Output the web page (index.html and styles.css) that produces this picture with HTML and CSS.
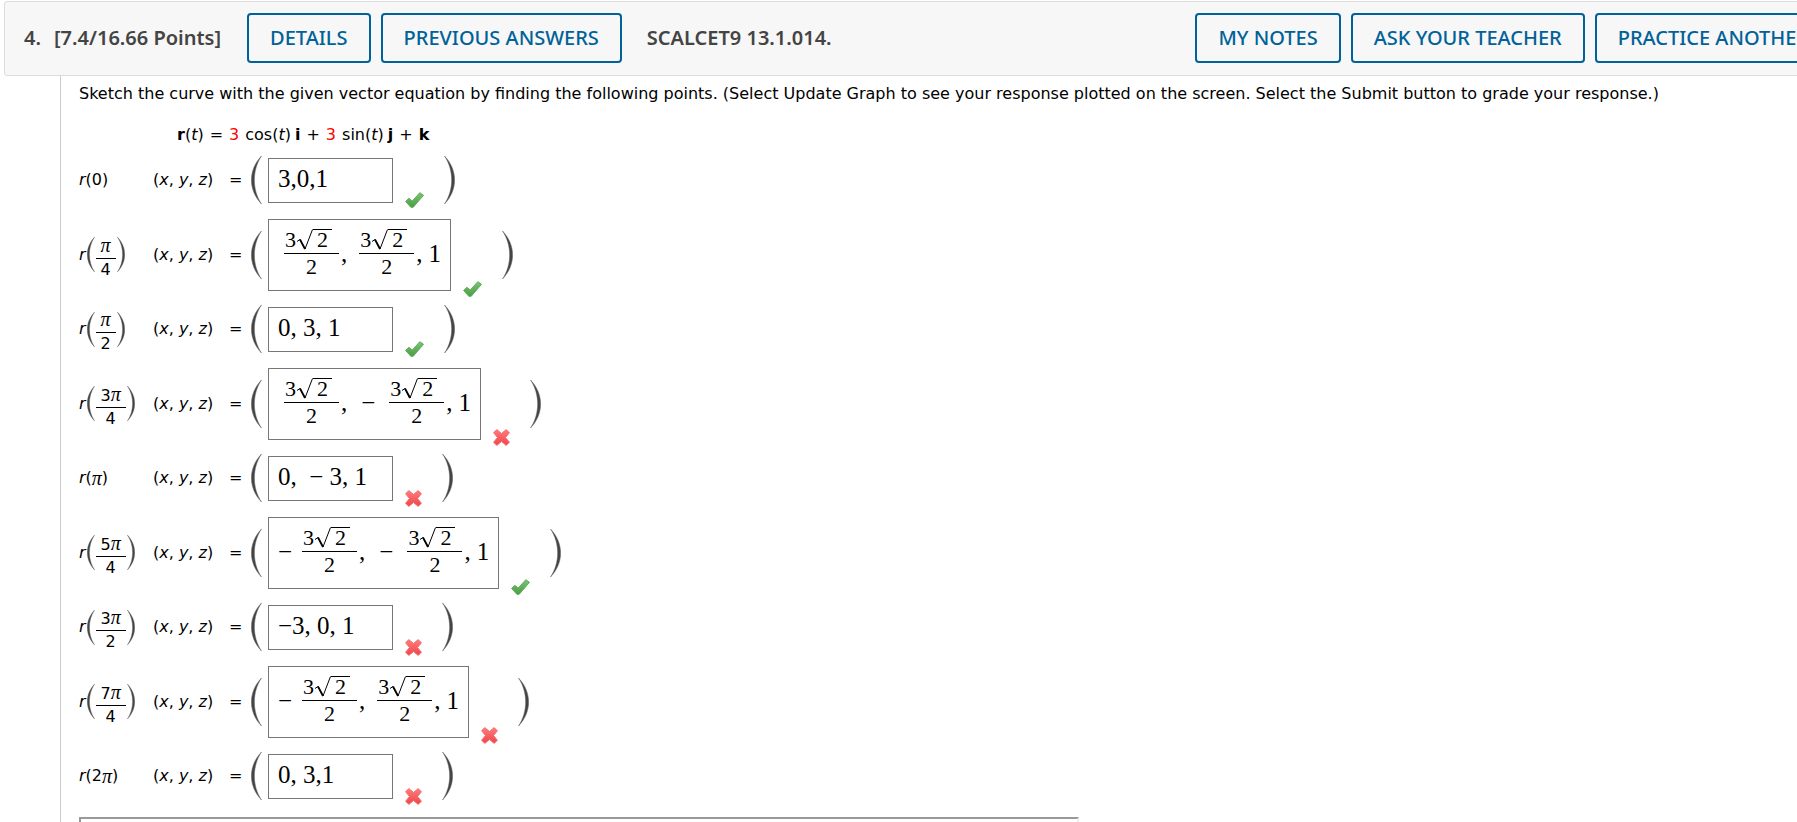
FILE: index.html
```html
<!DOCTYPE html>
<html lang="en">
<head>
<meta charset="utf-8">
<title>SCALCET9 13.1.014.</title>
<link rel="stylesheet" href="styles.css">
</head>
<body>
<svg class="defs" aria-hidden="true">
  <defs>
    <linearGradient id="green" x1="0" y1="0" x2="0" y2="1"><stop offset="0" stop-color="#7cc474"/><stop offset="1" stop-color="#4a9c48"/></linearGradient>
    <linearGradient id="red" x1="0" y1="0" x2="0" y2="1"><stop offset="0" stop-color="#ff7d7d"/><stop offset="1" stop-color="#ee4448"/></linearGradient>
    <symbol id="open" viewBox="0 0 11 48" preserveAspectRatio="none"><path d="M10.500 0C-3 14-3 34 10.500 48C1 34 1 14 10.500 0Z" fill="#444" stroke="#666" stroke-width=".5"/></symbol>
    <symbol id="close" viewBox="0 0 11 48" preserveAspectRatio="none"><path d="M.5 0C14 14 14 34 .5 48C10 34 10 14 .5 0Z" fill="#444" stroke="#666" stroke-width=".5"/></symbol>
    <symbol id="root" viewBox="0 0 17 21"><path d="M1 12.500L4 10.500L9 20L16.500.5" fill="none" stroke="#000" stroke-width="1"/><path d="M4 10.500L9 20" stroke="#000" stroke-width="1.800"/></symbol>
    <symbol id="check" viewBox="0 0 19 16"><path d="M.6 9.500L3.800 6.300L7.300 9L14.800.7L18.500 3.300L8.300 15.200L6 15.400Z" fill="url(#green)" stroke="#5fae5a" stroke-width="1" stroke-linejoin="round"/></symbol>
    <symbol id="cross" viewBox="0 0 17 17"><path d="M.6 3.800L3.800.6L8.500 4.500L13.200.6L16.400 3.800L12.500 8.500L16.400 13.200L13.200 16.400L8.500 12.500L3.800 16.400L.6 13.200L4.500 8.500Z" fill="url(#red)" stroke="#f66a6c" stroke-width="1" stroke-linejoin="round"/></symbol>
  </defs>
</svg>

<header class="bar">
  <span class="num">4.</span>
  <span class="points">[7.4/16.66 Points]</span>
  <button class="btn" type="button">DETAILS</button>
  <button class="btn" type="button">PREVIOUS ANSWERS</button>
  <span class="code">SCALCET9 13.1.014.</span>
  <div class="tools">
    <button class="btn" type="button">MY NOTES</button>
    <button class="btn" type="button">ASK YOUR TEACHER</button>
    <button class="btn" type="button">PRACTICE ANOTHER</button>
  </div>
</header>

<main class="question">
  <p class="prompt">Sketch the curve with the given vector equation by finding the following points. (Select Update Graph to see your response plotted on the screen. Select the Submit button to grade your response.)</p>
  <p class="equation"><span><b>r</b>(<i>t</i>)</span><span>=</span><span class="value">3</span><span>cos(<i>t</i>)<b class="unit">i</b></span><span>+</span><span class="value">3</span><span>sin(<i>t</i>)<b class="unit">j</b></span><span>+</span><b>k</b></p>

  <div class="rows">
    <div class="row">
      <label class="at" for="p0"><i>r</i>(0)</label>
      <span class="xyz">(<i>x</i>, <i>y</i>, <i>z</i>)</span><span class="eq">=</span>
      <svg class="paren"><use href="#open"/></svg>
      <input class="box" id="p0" type="text" value="3,0,1">
      <svg class="mark check" role="img" aria-label="Correct"><use href="#check"/></svg>
      <svg class="paren"><use href="#close"/></svg>
    </div>
    <div class="row">
      <span class="at" id="l1"><i>r</i><svg class="small"><use href="#open"/></svg><span class="ratio"><span class="top"><i class="pi">π</i></span><span>4</span></span><svg class="small"><use href="#close"/></svg></span>
      <span class="xyz">(<i>x</i>, <i>y</i>, <i>z</i>)</span><span class="eq">=</span>
      <svg class="paren"><use href="#open"/></svg>
      <div class="box tall" role="textbox" tabindex="0" aria-labelledby="l1"><span class="frac"><span class="over">3<svg class="root"><use href="#root"/></svg><span class="rad">2</span></span><span>2</span></span><span class="comma">,</span><span class="frac"><span class="over">3<svg class="root"><use href="#root"/></svg><span class="rad">2</span></span><span>2</span></span><span class="comma">,</span><span>1</span></div>
      <svg class="mark check" role="img" aria-label="Correct"><use href="#check"/></svg>
      <svg class="paren"><use href="#close"/></svg>
    </div>
    <div class="row">
      <label class="at" for="p2"><i>r</i><svg class="small"><use href="#open"/></svg><span class="ratio"><span class="top"><i class="pi">π</i></span><span>2</span></span><svg class="small"><use href="#close"/></svg></label>
      <span class="xyz">(<i>x</i>, <i>y</i>, <i>z</i>)</span><span class="eq">=</span>
      <svg class="paren"><use href="#open"/></svg>
      <input class="box" id="p2" type="text" value="0, 3, 1">
      <svg class="mark check" role="img" aria-label="Correct"><use href="#check"/></svg>
      <svg class="paren"><use href="#close"/></svg>
    </div>
    <div class="row">
      <span class="at" id="l3"><i>r</i><svg class="small"><use href="#open"/></svg><span class="ratio"><span class="top">3<i class="pi">π</i></span><span>4</span></span><svg class="small"><use href="#close"/></svg></span>
      <span class="xyz">(<i>x</i>, <i>y</i>, <i>z</i>)</span><span class="eq">=</span>
      <svg class="paren"><use href="#open"/></svg>
      <div class="box tall" role="textbox" tabindex="0" aria-labelledby="l3"><span class="frac"><span class="over">3<svg class="root"><use href="#root"/></svg><span class="rad">2</span></span><span>2</span></span><span class="comma">,</span><span class="minus">−</span><span class="frac"><span class="over">3<svg class="root"><use href="#root"/></svg><span class="rad">2</span></span><span>2</span></span><span class="comma">,</span><span>1</span></div>
      <svg class="mark cross" role="img" aria-label="Incorrect"><use href="#cross"/></svg>
      <svg class="paren"><use href="#close"/></svg>
    </div>
    <div class="row">
      <label class="at" for="p4"><i>r</i>(<i class="pi">π</i>)</label>
      <span class="xyz">(<i>x</i>, <i>y</i>, <i>z</i>)</span><span class="eq">=</span>
      <svg class="paren"><use href="#open"/></svg>
      <input class="box" id="p4" type="text" value="0,  − 3, 1">
      <svg class="mark cross" role="img" aria-label="Incorrect"><use href="#cross"/></svg>
      <svg class="paren"><use href="#close"/></svg>
    </div>
    <div class="row">
      <span class="at" id="l5"><i>r</i><svg class="small"><use href="#open"/></svg><span class="ratio"><span class="top">5<i class="pi">π</i></span><span>4</span></span><svg class="small"><use href="#close"/></svg></span>
      <span class="xyz">(<i>x</i>, <i>y</i>, <i>z</i>)</span><span class="eq">=</span>
      <svg class="paren"><use href="#open"/></svg>
      <div class="box tall" role="textbox" tabindex="0" aria-labelledby="l5"><span class="sign">−</span><span class="frac"><span class="over">3<svg class="root"><use href="#root"/></svg><span class="rad">2</span></span><span>2</span></span><span class="comma">,</span><span class="minus">−</span><span class="frac"><span class="over">3<svg class="root"><use href="#root"/></svg><span class="rad">2</span></span><span>2</span></span><span class="comma">,</span><span>1</span></div>
      <svg class="mark check" role="img" aria-label="Correct"><use href="#check"/></svg>
      <svg class="paren"><use href="#close"/></svg>
    </div>
    <div class="row">
      <label class="at" for="p6"><i>r</i><svg class="small"><use href="#open"/></svg><span class="ratio"><span class="top">3<i class="pi">π</i></span><span>2</span></span><svg class="small"><use href="#close"/></svg></label>
      <span class="xyz">(<i>x</i>, <i>y</i>, <i>z</i>)</span><span class="eq">=</span>
      <svg class="paren"><use href="#open"/></svg>
      <input class="box" id="p6" type="text" value="−3, 0, 1">
      <svg class="mark cross" role="img" aria-label="Incorrect"><use href="#cross"/></svg>
      <svg class="paren"><use href="#close"/></svg>
    </div>
    <div class="row">
      <span class="at" id="l7"><i>r</i><svg class="small"><use href="#open"/></svg><span class="ratio"><span class="top">7<i class="pi">π</i></span><span>4</span></span><svg class="small"><use href="#close"/></svg></span>
      <span class="xyz">(<i>x</i>, <i>y</i>, <i>z</i>)</span><span class="eq">=</span>
      <svg class="paren"><use href="#open"/></svg>
      <div class="box tall" role="textbox" tabindex="0" aria-labelledby="l7"><span class="sign">−</span><span class="frac"><span class="over">3<svg class="root"><use href="#root"/></svg><span class="rad">2</span></span><span>2</span></span><span class="comma">,</span><span class="frac"><span class="over">3<svg class="root"><use href="#root"/></svg><span class="rad">2</span></span><span>2</span></span><span class="comma">,</span><span>1</span></div>
      <svg class="mark cross" role="img" aria-label="Incorrect"><use href="#cross"/></svg>
      <svg class="paren"><use href="#close"/></svg>
    </div>
    <div class="row">
      <label class="at" for="p8"><i>r</i>(2<i class="pi">π</i>)</label>
      <span class="xyz">(<i>x</i>, <i>y</i>, <i>z</i>)</span><span class="eq">=</span>
      <svg class="paren"><use href="#open"/></svg>
      <input class="box" id="p8" type="text" value="0, 3,1">
      <svg class="mark cross" role="img" aria-label="Incorrect"><use href="#cross"/></svg>
      <svg class="paren"><use href="#close"/></svg>
    </div>
  </div>

  <div class="graph"></div>
</main>
</body>
</html>
```
FILE: styles.css
```css
* { box-sizing: border-box; }
body {
  display: flex;
  flex-direction: column;
  margin: 0;
  padding: 1px 0 0 4px;
  min-height: 100vh;
  overflow: hidden;
  background: #fff;
  color: #000;
  font: 16px/20px Verdana, "DejaVu Sans", sans-serif;
}
svg { flex: none; display: block; }
.defs { position: absolute; width: 0; height: 0; }

/* Question header */
.bar {
  display: flex;
  align-items: center;
  gap: 10px;
  width: calc(100% + 60px);
  padding: 11px 24px 12px 19px;
  border: 1px solid #ddd;
  border-radius: 3px;
  background: #f7f7f7;
  color: #444;
  font: 600 20px/26px "Noto Sans", sans-serif;
  white-space: nowrap;
}
.num { margin-right: 3px; }
.points { margin-right: 16px; }
.code { margin-left: 15px; }
.tools { display: flex; gap: 10px; margin-left: auto; }
.btn {
  height: 50px;
  padding: 0 21px;
  border: 2px solid #006298;
  border-radius: 4px;
  background: transparent;
  color: #006298;
  font: 500 20px/26px "Noto Sans", sans-serif;
}

/* Question body */
.question {
  flex: 1;
  display: flex;
  flex-direction: column;
  margin-left: 56px;
  padding: 8px 0 0 18px;
  border-left: 1px solid #ccc;
}
.prompt { margin: 0; white-space: nowrap; }
.equation { display: flex; gap: 6px; margin: 21px 0 0 98px; }
.value { color: #f00; }
.unit { margin-left: 4px; }

.rows { margin-top: -2px; }
.row { display: flex; align-items: center; height: 74px; }
.row:nth-child(even) { height: 75px; }
.at { display: flex; align-items: center; width: 74px; }
.xyz { width: 76px; white-space: nowrap; }
.eq { width: 22px; }
.ratio { display: flex; flex-direction: column; align-items: center; padding-top: 6px; }
.top { border-bottom: 1px solid #000; padding: 0 5px; }
.ratio > span { line-height: 22px; }
.pi { font: italic 20px/20px "Liberation Serif", serif; }
.small { width: 8px; height: 35px; margin: 0 1px; }
.paren { width: 11px; height: 48px; }

.box {
  width: 125px;
  height: 45px;
  margin: 0 11px 0 6px;
  padding: 0 9px 2px;
  border: 1px solid #767676;
  background: #fff;
  color: #000;
  font: 25px/28px "Liberation Serif", serif;
}
.tall {
  display: flex;
  align-items: center;
  width: auto;
  height: 72px;
}
.frac {
  display: flex;
  flex-direction: column;
  align-items: center;
  margin: 0 2px 0 6px;
  font-size: 22px;
  line-height: 25px;
}
.over {
  display: flex;
  align-items: flex-end;
  padding: 0 7px 3px 1px;
  border-bottom: 1px solid #000;
  line-height: 21px;
}
.root { width: 17px; height: 21px; }
.rad { padding: 0 4px; border-top: 1px solid #000; line-height: 20px; }
.comma { margin-right: 6px; }
.minus { margin: 0 8px; }
.sign { margin-right: 4px; }

.mark { align-self: center; margin: 40px 20px 0 1px; }
.check { width: 19px; height: 16px; }
.cross { width: 17px; height: 17px; }
.tall + .mark { margin-top: 68px; }

.graph {
  flex: 1;
  width: 100%;
  max-width: 1000px;
  margin-top: 4px;
  border: 2px solid;
  border-color: #999 #eee #eee #999;
  border-bottom: 0;
}
```
